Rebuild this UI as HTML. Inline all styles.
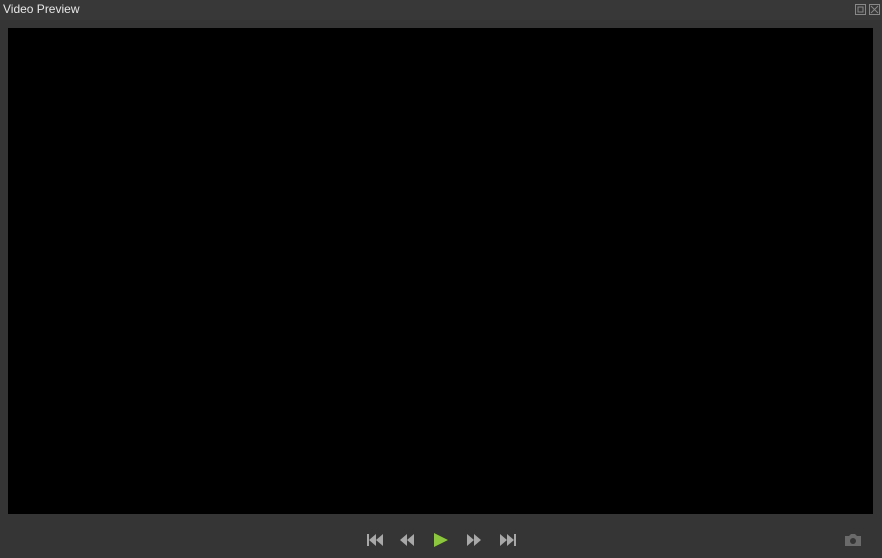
<!DOCTYPE html>
<html><head><style>
html,body{margin:0;padding:0;width:882px;height:558px;overflow:hidden;background:#353535;font-family:"Liberation Sans",sans-serif}
.t{position:absolute;left:0;top:0;width:882px;height:20px;background:#383838}
.t span{position:absolute;left:3px;top:2px;color:#e8e8e8;font-size:12px}
.v{position:absolute;left:8px;top:28px;width:865px;height:486px;background:#000}
svg{position:absolute}
</style></head><body>
<div class="t"><span>Video Preview</span></div>
<svg style="left:854px;top:3px" width="28" height="13">
<rect x="1.5" y="1.5" width="10" height="10" fill="none" stroke="#888"/>
<rect x="4" y="4" width="5" height="5" fill="none" stroke="#888"/>
<rect x="15.5" y="1.5" width="10" height="10" fill="none" stroke="#888"/>
<path d="M17 3L24 10M24 3L17 10" stroke="#888"/>
</svg>
<div class="v"></div>
<svg style="left:360px;top:530px" width="170" height="20" fill="#a8a8a8">
<rect x="7" y="4" width="2" height="12"/><path d="M9 10L16 4V16Z M16 10L23 4V16Z"/>
<path d="M40 10L47 4V16Z M47 10L54 4V16Z"/>
<path d="M74 3L88 10L74 17Z" fill="#8cc63f"/>
<path d="M107 4L114 10L107 16Z M114 4L121 10L114 16Z"/>
<path d="M140 4L147 10L140 16Z M147 4L154 10L147 16Z"/><rect x="154" y="4" width="2" height="12"/>
</svg>
<svg style="left:844px;top:532px" width="18" height="16">
<path d="M1 4H5L7 2H11L13 4H17V14H1Z" fill="#6a6a6a"/>
<circle cx="9" cy="9" r="3" fill="#353535"/>
</svg>
</body></html>
